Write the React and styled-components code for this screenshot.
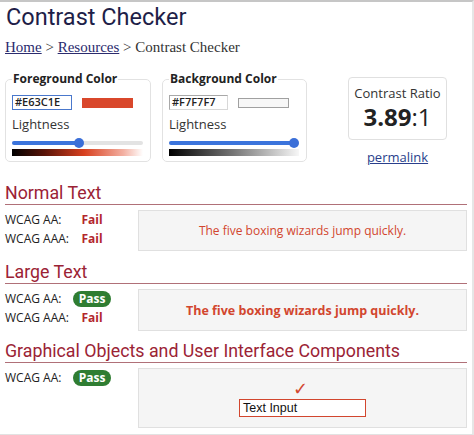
import React from "react";
import styled, { createGlobalStyle } from "styled-components";

const GlobalStyle = createGlobalStyle`
  html, body {
    margin: 0;
    padding: 0;
    background: #ffffff;
  }
`;

const Page = styled.div`
  width: 474px;
  height: 435px;
  box-sizing: border-box;
  border-top: 2px solid #c6c6c6;
  border-right: 2px solid #e6e6e6;
  border-bottom: 1px solid #e2e2e2;
  padding: 0 5px 0 5px;
  font-family: "Open Sans", sans-serif;
  color: #222;
  overflow: hidden;
`;

const Title = styled.h1`
  margin: 1px 0 0 1px;
  font-family: Roboto, sans-serif;
  font-weight: 400;
  font-size: 23.5px;
  line-height: 28px;
  color: #1e1e48;
`;

const Crumbs = styled.div`
  margin-top: 7px;
  font-family: "Liberation Serif", serif;
  font-size: 15px;
  line-height: 18px;
  color: #333;
`;

const CrumbLink = styled.a`
  color: #2b2b6e;
  text-decoration: underline;
`;

const Controls = styled.div`
  display: flex;
  align-items: flex-start;
  margin-top: 15px;
`;

const Box = styled.fieldset`
  margin: 0 ${(p) => p.$gap || 0}px 0 0;
  width: ${(p) => p.$w}px;
  box-sizing: border-box;
  border: 1px solid #e2e2e2;
  border-radius: 5px;
  padding: 0 7px 5px 6px;
  min-width: 0;
`;

const Legend = styled.legend`
  padding: 0 1px;
  font-weight: 700;
  font-size: 12px;
  line-height: 16px;
  color: #222;
`;

const InputRow = styled.div`
  display: flex;
  align-items: center;
  margin-top: 8px;
`;

const HexInput = styled.div`
  width: ${(p) => p.$w}px;
  height: 15px;
  box-sizing: border-box;
  border: ${(p) => (p.$focus ? "1.5px solid #4a78cc" : "1px solid #d8d8d8")};
  border-top-color: ${(p) => (p.$focus ? "#4a78cc" : "#a8a8a8")};
  border-left-color: ${(p) => (p.$focus ? "#4a78cc" : "#a8a8a8")};
  font-size: 11px;
  font-weight: 600;
  line-height: 12px;
  padding-left: 2px;
  color: #222;
  background: #fff;
`;

const Swatch = styled.div`
  width: 51px;
  height: 10px;
  margin-left: 10px;
  box-sizing: border-box;
  background: ${(p) => p.$color};
  border: ${(p) => (p.$bordered ? "1px solid #a0a0a0" : "none")};
`;

const Label = styled.div`
  margin-top: 6px;
  font-size: 13px;
  line-height: 16px;
  color: #333;
`;

const Slider = styled.div`
  position: relative;
  margin-top: 5px;
  height: 12px;
  display: flex;
  align-items: center;
`;

const Track = styled.div`
  position: relative;
  width: 100%;
  height: 4px;
  border-radius: 2px;
  background: #e3e3e3;
`;

const Fill = styled.div`
  height: 100%;
  border-radius: 2px;
  background: #3b74dc;
`;

const Thumb = styled.div`
  position: absolute;
  top: 50%;
  width: 10px;
  height: 10px;
  margin: -5px 0 0 -5px;
  border-radius: 50%;
  background: #3b6fd8;
`;

const Gradient = styled.div`
  height: 7px;
  background: ${(p) => p.$bg};
`;

const RatioCol = styled.div`
  display: flex;
  flex-direction: column;
  align-items: center;
  margin-left: 41px;
  margin-top: 6px;
`;

const RatioBox = styled.div`
  width: 99px;
  height: 63px;
  box-sizing: border-box;
  border: 1px solid #e0e0e0;
  border-radius: 4px;
  display: flex;
  flex-direction: column;
  align-items: center;
  padding-top: 6px;
`;

const RatioLabel = styled.div`
  font-size: 13px;
  line-height: 18px;
  color: #333;
`;

const RatioValue = styled.div`
  font-size: 24px;
  line-height: 30px;
  color: #222;
  b {
    font-weight: 700;
  }
`;

const Permalink = styled.a`
  margin-top: 9px;
  font-size: 13px;
  line-height: 16px;
  color: #2a3f8c;
  text-decoration: underline;
`;

const Section = styled.section`
  margin-top: ${(p) => p.$top}px;
`;

const Heading = styled.h2`
  margin: 0;
  font-family: Roboto, sans-serif;
  font-weight: 400;
  font-size: 17.8px;
  line-height: 21px;
  color: #9b2335;
  border-bottom: 1px solid #b07078;
  padding-bottom: 1px;
`;

const SectionBody = styled.div`
  display: flex;
  margin-top: 5px;
`;

const Results = styled.div`
  width: 133px;
  flex: none;
`;

const ResultRow = styled.div`
  display: flex;
  align-items: center;
  height: 19px;
  font-size: 12px;
`;

const ResultLabel = styled.span`
  width: 68px;
  color: #222;
`;

const Badge = styled.span`
  width: 38px;
  height: 16px;
  line-height: 16px;
  text-align: center;
  border-radius: 8px;
  font-weight: 700;
  font-size: 12px;
  color: ${(p) => (p.$pass ? "#fff" : "#b3262c")};
  background: ${(p) => (p.$pass ? "#2f7d32" : "transparent")};
`;

const Sample = styled.div`
  flex: 1;
  height: ${(p) => p.$h}px;
  box-sizing: border-box;
  background: #f5f5f5;
  border: 1px solid #e0e0e0;
  display: flex;
  flex-direction: column;
  align-items: center;
  justify-content: center;
`;

const SampleText = styled.div`
  color: #d2462e;
  font-size: ${(p) => (p.$large ? 12.5 : 12)}px;
  font-weight: ${(p) => (p.$large ? 700 : 400)};
`;

const Check = styled.div`
  color: #d2462e;
  font-family: "DejaVu Sans", sans-serif;
  font-size: 18px;
  line-height: 17px;
  margin-left: -4px;
`;

const TextInput = styled.div`
  margin-top: 2px;
  width: 127px;
  height: 18px;
  box-sizing: border-box;
  border: 1px solid #d2462e;
  background: #fff;
  font-family: "Liberation Sans", Arial, sans-serif;
  font-size: 12.5px;
  line-height: 16px;
  padding-left: 3px;
  color: #111;
`;

const ColorBox = ({ title, hex, swatch, bordered, focus, value, gradient, width, gap }) => (
  <Box $w={width} $gap={gap}>
    <Legend>{title}</Legend>
    <InputRow>
      <HexInput $w={focus ? 60 : 59} $focus={focus}>{hex}</HexInput>
      <Swatch $color={swatch} $bordered={bordered} />
    </InputRow>
    <Label>Lightness</Label>
    <Slider>
      <Track>
        <Fill style={{ width: `${value}%` }} />
        <Thumb style={{ left: `${value}%` }} />
      </Track>
    </Slider>
    <Gradient $bg={gradient} />
  </Box>
);

const Result = ({ label, pass }) => (
  <ResultRow>
    <ResultLabel>{label}</ResultLabel>
    <Badge $pass={pass}>{pass ? "Pass" : "Fail"}</Badge>
  </ResultRow>
);

export default function App() {
  return (
    <Page>
      <GlobalStyle />
      <Title>Contrast Checker</Title>
      <Crumbs>
        <CrumbLink>Home</CrumbLink> &gt; <CrumbLink>Resources</CrumbLink> &gt; Contrast Checker
      </Crumbs>

      <Controls>
        <ColorBox
          title="Foreground Color"
          hex="#E63C1E"
          swatch="#d9472b"
          focus
          value={51}
          width={146}
          gap={11}
          gradient="linear-gradient(to right, #000 0%, #5a1408 25%, #d8401f 55%, #f3b0a2 85%, #fff 100%)"
        />
        <ColorBox
          title="Background Color"
          hex="#F7F7F7"
          swatch="#f7f7f7"
          bordered
          value={96}
          width={145}
          gradient="linear-gradient(to right, #000 0%, #777 50%, #f7f7f7 100%)"
        />
        <RatioCol>
          <RatioBox>
            <RatioLabel>Contrast Ratio</RatioLabel>
            <RatioValue>
              <b>3.89</b>:1
            </RatioValue>
          </RatioBox>
          <Permalink>permalink</Permalink>
        </RatioCol>
      </Controls>

      <Section $top={17}>
        <Heading>Normal Text</Heading>
        <SectionBody>
          <Results>
            <Result label="WCAG AA:" />
            <Result label="WCAG AAA:" />
          </Results>
          <Sample $h={41}>
            <SampleText>The five boxing wizards jump quickly.</SampleText>
          </Sample>
        </SectionBody>
      </Section>

      <Section $top={10}>
        <Heading>Large Text</Heading>
        <SectionBody>
          <Results>
            <Result label="WCAG AA:" pass />
            <Result label="WCAG AAA:" />
          </Results>
          <Sample $h={42}>
            <SampleText $large>The five boxing wizards jump quickly.</SampleText>
          </Sample>
        </SectionBody>
      </Section>

      <Section $top={9}>
        <Heading>Graphical Objects and User Interface Components</Heading>
        <SectionBody>
          <Results>
            <Result label="WCAG AA:" pass />
          </Results>
          <Sample $h={60}>
            <Check>✓</Check>
            <TextInput>Text Input</TextInput>
          </Sample>
        </SectionBody>
      </Section>
    </Page>
  );
}
